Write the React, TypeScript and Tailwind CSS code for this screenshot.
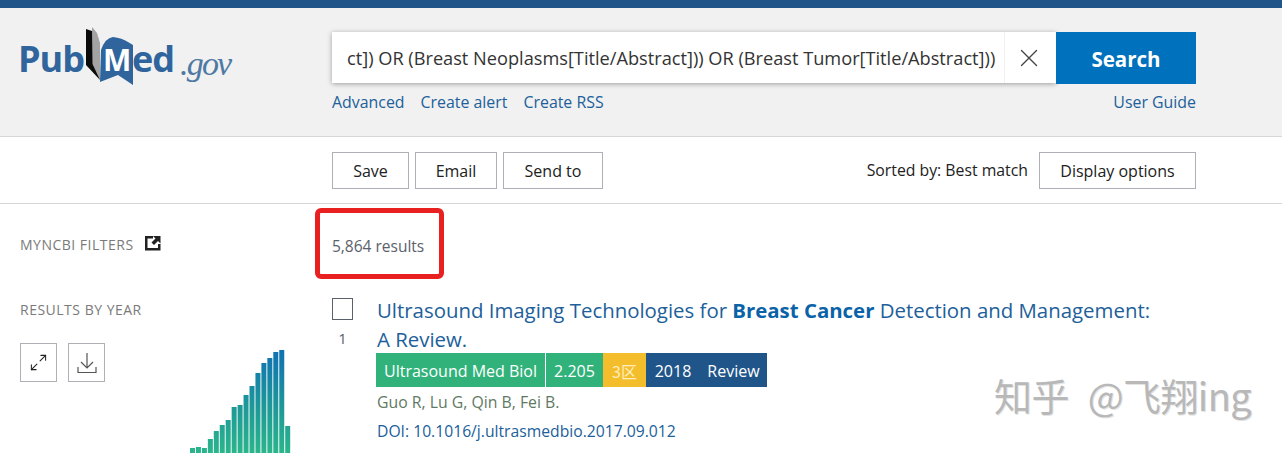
import { X, Maximize2 } from "lucide-react";

const bars = [5, 6, 5, 14, 22, 28, 33, 46, 48, 58, 67, 80, 90, 95, 101, 103, 27];

function YearChart() {
    return (
        <svg width="104" height="103" viewBox="0 0 104 103" className="block">
            <defs>
                <linearGradient id="bars" gradientUnits="userSpaceOnUse" x1="0" y1="0" x2="0" y2="103">
                    <stop offset="0" stopColor="#0f71b3" />
                    <stop offset="0.6" stopColor="#1f9c96" />
                    <stop offset="1" stopColor="#2bb58c" />
                </linearGradient>
            </defs>
            {bars.map((h, i) => (
                <rect key={i} x={i * 5.95} y={103 - h} width="5" height={h} fill="url(#bars)" />
            ))}
        </svg>
    );
}

function Logo() {
    return (
        <div className="relative w-[230px] h-[70px] font-['Open_Sans',sans-serif]">
            <span className="absolute -left-[1px] top-[11px] text-[36px] leading-[48px] font-bold tracking-[-1px] text-[#2f659c]">Pub</span>
            {/* viewBox is in page coordinates, easier to read off the screenshot */}
            <svg width="50" height="62" viewBox="85 26 50 62" className="absolute left-[66px] top-[2px]">
                <path d="M92 27 L97 33 L100 43 L100 80 L92 68 Z" fill="#a3a3a3" />
                <path d="M86 29 L92 31 L92.500 64 L100 80 L86 65 Z" fill="#0b0b0b" />
                <path d="M101 50 Q105 38 113 37 Q122 38 128 42 L133 45 L133 85 L118 75 L100 82 Z" fill="#2f659c" />
            </svg>
            <span className="absolute left-[84px] top-[15px] text-[30px] leading-[42px] font-bold tracking-[-1px] text-white">M</span>
            <span className="absolute left-[113px] top-[11px] text-[36px] leading-[48px] font-bold tracking-[-1px] text-[#2f659c]">ed</span>
            <span className="absolute left-[161px] top-[18px] text-[34px] leading-[44px] italic tracking-[-1.8px] font-['Liberation_Serif',serif] text-[#4f79a3]">.gov</span>
        </div>
    );
}

function ToolButton({ label, className }: { label: string; className: string }) {
    return (
        <button className={`h-[37px] border border-[#aeb0b5] bg-white text-[16px] text-[#212121] ${className}`}>
            {label}
        </button>
    );
}

export default function App() {
    return (
        <div className="relative w-[1282px] h-[453px] overflow-hidden bg-white font-['Open_Sans',sans-serif] text-[#212121]">
            <div className="h-2 bg-[#20558a]"></div>

            <header className="h-[129px] bg-[#f1f1f1] border-b border-[#d6d7d9] flex">
                <div className="w-[332px] pl-[19px] pt-[16px]">
                    <Logo />
                </div>
                <div className="w-[864px] pt-[24px]">
                    <div className="flex h-[52px]">
                        <div className="w-[724px] h-[51px] bg-white flex items-center shadow-[0_1px_5px_rgba(0,0,0,0.35)]">
                            <div className="w-[672px] pl-[15px] pt-[3px] text-[18.2px] text-[#333] whitespace-nowrap overflow-hidden">
                                ct]) OR (Breast Neoplasms[Title/Abstract])) OR (Breast Tumor[Title/Abstract]))
                            </div>
                            <div className="flex-1 flex justify-center border-l border-[#f1f1f1] h-full items-center pr-[3px]">
                                <X size={30} strokeWidth={1.1} className="text-[#444]" />
                            </div>
                        </div>
                        <button className="w-[140px] bg-[#0071bc] text-white text-[20.5px] font-bold pt-[3px]">Search</button>
                    </div>
                    <div className="flex items-center gap-[16px] mt-[6px] text-[15.9px] leading-[24px] text-[#20609a]">
                        <span>Advanced</span>
                        <span>Create alert</span>
                        <span>Create RSS</span>
                        <span className="ml-auto">User Guide</span>
                    </div>
                </div>
            </header>

            <div className="h-[67px] border-b border-[#d6d7d9] flex items-start">
                <div className="w-[332px]"></div>
                <div className="w-[864px] flex items-center pt-[15px]">
                    <div className="flex gap-[6px]">
                        <ToolButton label="Save" className="w-[77px]" />
                        <ToolButton label="Email" className="w-[82px]" />
                        <ToolButton label="Send to" className="w-[100px]" />
                    </div>
                    <span className="ml-auto pt-[1px] text-[15.8px] mr-[11px]">Sorted by: Best match</span>
                    <ToolButton label="Display options" className="w-[157px]" />
                </div>
            </div>

            <div className="flex">
                <aside className="w-[332px] pl-5 pt-[31px] text-[#7a7a7a]">
                    <div className="flex items-center h-[18px] text-[14px] tracking-[0.5px]">
                        <span>MYNCBI FILTERS</span>
                        <svg width="16" height="16" viewBox="0 0 16 16" className="ml-[11px] -mt-[2px]">
                            <path d="M0 1h8v2.500H2.500v9.500h10.500V9H15.500v6.500H0Z" fill="#212121" />
                            <path d="M8 1h7.500v7.500l-2.500-2.500-4 4-2.500-2.500 4-4Z" fill="#212121" />
                        </svg>
                    </div>
                    <div className="mt-[47px] h-[18px] flex items-center text-[14px] tracking-[0.5px]">RESULTS BY YEAR</div>
                    <div className="flex relative">
                        <div className="flex gap-[11px] mt-[25px]">
                            <button className="w-[37px] h-[39px] border border-[#aeb0b5] flex items-center justify-center">
                                <Maximize2 size={19} strokeWidth={1.3} className="text-[#212121]" />
                            </button>
                            <button className="w-[37px] h-[39px] border border-[#aeb0b5] flex items-center justify-center">
                                <svg width="20" height="22" viewBox="0 0 20 22" fill="none" stroke="#555" strokeWidth="1.2">
                                    <path d="M10 1V16M4 10l6 6 6-6" />
                                    <path d="M1 15v5.500h18V15" />
                                </svg>
                            </button>
                        </div>
                        <div className="ml-[85px] mt-[32px]">
                            <YearChart />
                        </div>
                    </div>
                </aside>

                <main className="w-[864px]">
                    <div className="pt-[32px] h-[94px] text-[15.500px] leading-[20px] text-[#5b616b]">5,864 results</div>
                    <div className="flex">
                        <div className="w-[45px]">
                            <div className="w-[21px] h-[22px] border border-[#5b616b]"></div>
                            <div className="w-[21px] mt-[8px] text-center text-[15px] leading-[20px] text-[#5b616b]">1</div>
                        </div>
                        <div className="w-[780px]">
                            <div className="text-[20.400px] leading-[29px] text-[#20609a] -mt-[2px] h-[58px]">
                                Ultrasound Imaging Technologies for <b className="font-bold text-[#0a62a8]">Breast Cancer</b> Detection and Management: A Review.
                            </div>
                            <div className="flex h-[34px] -mt-[1px] -ml-[1px] text-[16px] leading-[36px] text-white w-max">
                                <span className="w-[170px] bg-[#31b27a] text-center border-r border-white">Ultrasound Med Biol</span>
                                <span className="w-[57px] bg-[#31b27a] text-center">2.205</span>
                                <span className="w-[43px] bg-[#f4bd2c] text-center text-[#fdeebd] font-['Noto_Sans_CJK_SC',sans-serif]">3区</span>
                                <span className="w-[54px] bg-[#20558a] text-center">2018</span>
                                <span className="w-[67px] bg-[#20558a] text-center">Review</span>
                            </div>
                            <div className="mt-[4px] text-[15.800px] leading-[22px] text-[#5f7a63]">Guo R, Lu G, Qin B, Fei B.</div>
                            <div className="mt-[7px] text-[15.700px] leading-[22px] text-[#20609a]">DOI: 10.1016/j.ultrasmedbio.2017.09.012</div>
                        </div>
                    </div>
                </main>
            </div>

            <div className="absolute left-[315px] top-[208px] w-[129px] h-[71px] border-[5px] border-[#e8201f] rounded-[6px]"></div>
            <div className="absolute left-[994px] top-[368px] text-[38px] leading-[54px] [word-spacing:11px] tracking-[-0.6px] whitespace-nowrap text-[#b8b8b8] font-['Noto_Sans_CJK_SC',sans-serif] [text-shadow:1px_1px_0_#e4e4e4]">
                知乎 @飞翔ing
            </div>
        </div>
    );
}
